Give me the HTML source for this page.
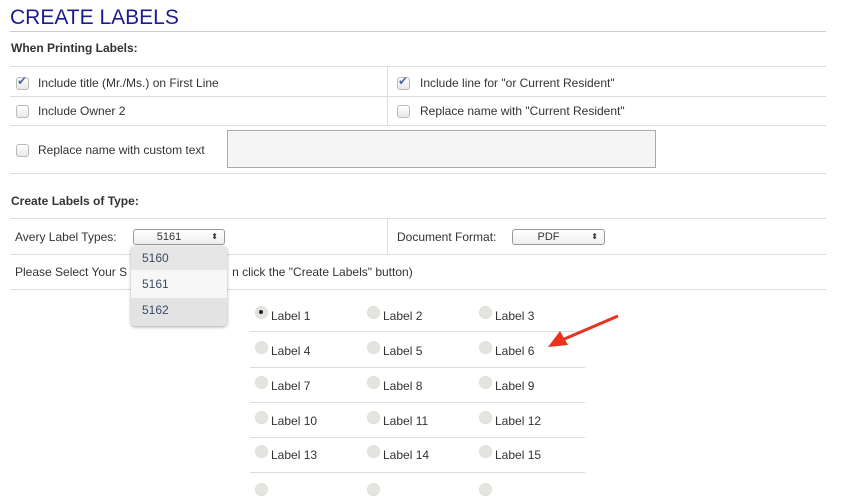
<!DOCTYPE html><html><head><style>
body{margin:0;width:854px;height:486px;background:#fff;font-family:"Liberation Sans",sans-serif;color:#333;position:relative;overflow:hidden}
.a{position:absolute;white-space:nowrap}
.t{font-size:12px}
.h{position:absolute;height:1px;background:#ddd}
.v{position:absolute;width:1px;background:#ddd}
.cb{position:absolute;width:11px;height:11px;border:1px solid #bbb;border-radius:3px;background:linear-gradient(#fff,#e8e8e8)}
.rd{position:absolute;width:11px;height:11px;border-radius:50%;background:#e6e4e0;border:1px solid #e0ddd8}
.sel{position:absolute;height:14px;border:1px solid #999;border-radius:3px;background:linear-gradient(#fff,#eee);font-size:11px;text-align:center;line-height:14px}
</style></head><body>
<div class="a" style="left:10px;top:6px;font-size:21px;color:#1c1c8f">CREATE LABELS</div>
<div class="h" style="left:10px;top:31px;width:816px;background:#ccc"></div>
<div class="a t" style="left:11px;top:41px;font-weight:bold">When Printing Labels:</div>
<div class="h" style="left:10px;top:66px;width:816px"></div>
<div class="v" style="left:387px;top:66px;height:59px"></div>
<div class="cb" style="left:16px;top:77px"></div><div class="a" style="left:17px;top:74px;color:#4a6a9a;font-size:12px">✔</div>
<div class="a t" style="left:38px;top:76px">Include title (Mr./Ms.) on First Line</div>
<div class="cb" style="left:397px;top:77px"></div><div class="a" style="left:398px;top:74px;color:#4a6a9a;font-size:12px">✔</div>
<div class="a t" style="left:420px;top:76px">Include line for "or Current Resident"</div>
<div class="h" style="left:10px;top:96px;width:816px"></div>
<div class="cb" style="left:16px;top:105px"></div><div class="a t" style="left:38px;top:104px">Include Owner 2</div>
<div class="cb" style="left:397px;top:105px"></div><div class="a t" style="left:420px;top:104px">Replace name with "Current Resident"</div>
<div class="h" style="left:10px;top:125px;width:816px"></div>
<div class="cb" style="left:16px;top:144px"></div><div class="a t" style="left:38px;top:143px">Replace name with custom text</div>
<div class="a" style="left:227px;top:130px;width:427px;height:36px;border:1px solid #aaa;background:#f5f5f5"></div>
<div class="h" style="left:10px;top:173px;width:816px"></div>
<div class="a t" style="left:11px;top:194px;font-weight:bold">Create Labels of Type:</div>
<div class="h" style="left:10px;top:218px;width:816px"></div>
<div class="v" style="left:387px;top:218px;height:36px"></div>
<div class="a t" style="left:15px;top:230px">Avery Label Types:</div>
<div class="sel" style="left:133px;top:229px;width:90px"><span style="margin-right:20px">5161</span><span style="position:absolute;right:6px;font-size:8px">⬍</span></div>
<div class="a t" style="left:397px;top:230px">Document Format:</div>
<div class="sel" style="left:512px;top:229px;width:91px"><span style="margin-right:20px">PDF</span><span style="position:absolute;right:6px;font-size:8px">⬍</span></div>
<div class="h" style="left:10px;top:254px;width:816px"></div>
<div class="a t" style="left:15px;top:265px">Please Select Your S<span style="margin-left:105px">n click the "Create Labels" button)</span></div>
<div class="h" style="left:10px;top:289px;width:816px"></div>
<div class="a" style="left:131px;top:246px;width:96px;height:80px;border-radius:4px;box-shadow:0 1px 3px rgba(0,0,0,.35);overflow:hidden;font-size:12px;color:#3a4a66">
<div style="height:24px;background:#e6e6e6;padding-left:11px;line-height:24px">5160</div>
<div style="height:28px;background:#f7f7f7;padding-left:11px;line-height:28px">5161</div>
<div style="height:28px;background:#e3e3e3;padding-left:11px;line-height:24px">5162</div></div>
<div class="h" style="left:250px;top:331px;width:335px"></div>
<div class="h" style="left:250px;top:367px;width:335px"></div>
<div class="h" style="left:250px;top:402px;width:335px"></div>
<div class="h" style="left:250px;top:437px;width:335px"></div>
<div class="h" style="left:250px;top:472px;width:335px"></div>
<div id="g"></div>
<svg class="a" style="left:540px;top:310px" width="85" height="45"><line x1="78" y1="6" x2="22" y2="30" stroke="#e8341f" stroke-width="3"/><polygon points="8,37 20,21 28,35" fill="#e8341f"/></svg>
<script>
var ys=[309,344,379,414,448],xs=[255,367,479],h='';
for(var r=0;r<5;r++)for(var c=0;c<3;c++){var n=r*3+c+1;
h+='<div class="rd" style="left:'+xs[c]+'px;top:'+(ys[r]-3)+'px">'+(n==1?'<div style="width:4px;height:4px;border-radius:50%;background:#222;margin:3px"></div>':'')+'</div><div class="a t" style="left:'+(xs[c]+16)+'px;top:'+ys[r]+'px">Label '+n+'</div>';}
for(var c=0;c<3;c++)h+='<div class="rd" style="left:'+xs[c]+'px;top:483px"></div>';
document.getElementById('g').innerHTML=h;
</script>
</body></html>
